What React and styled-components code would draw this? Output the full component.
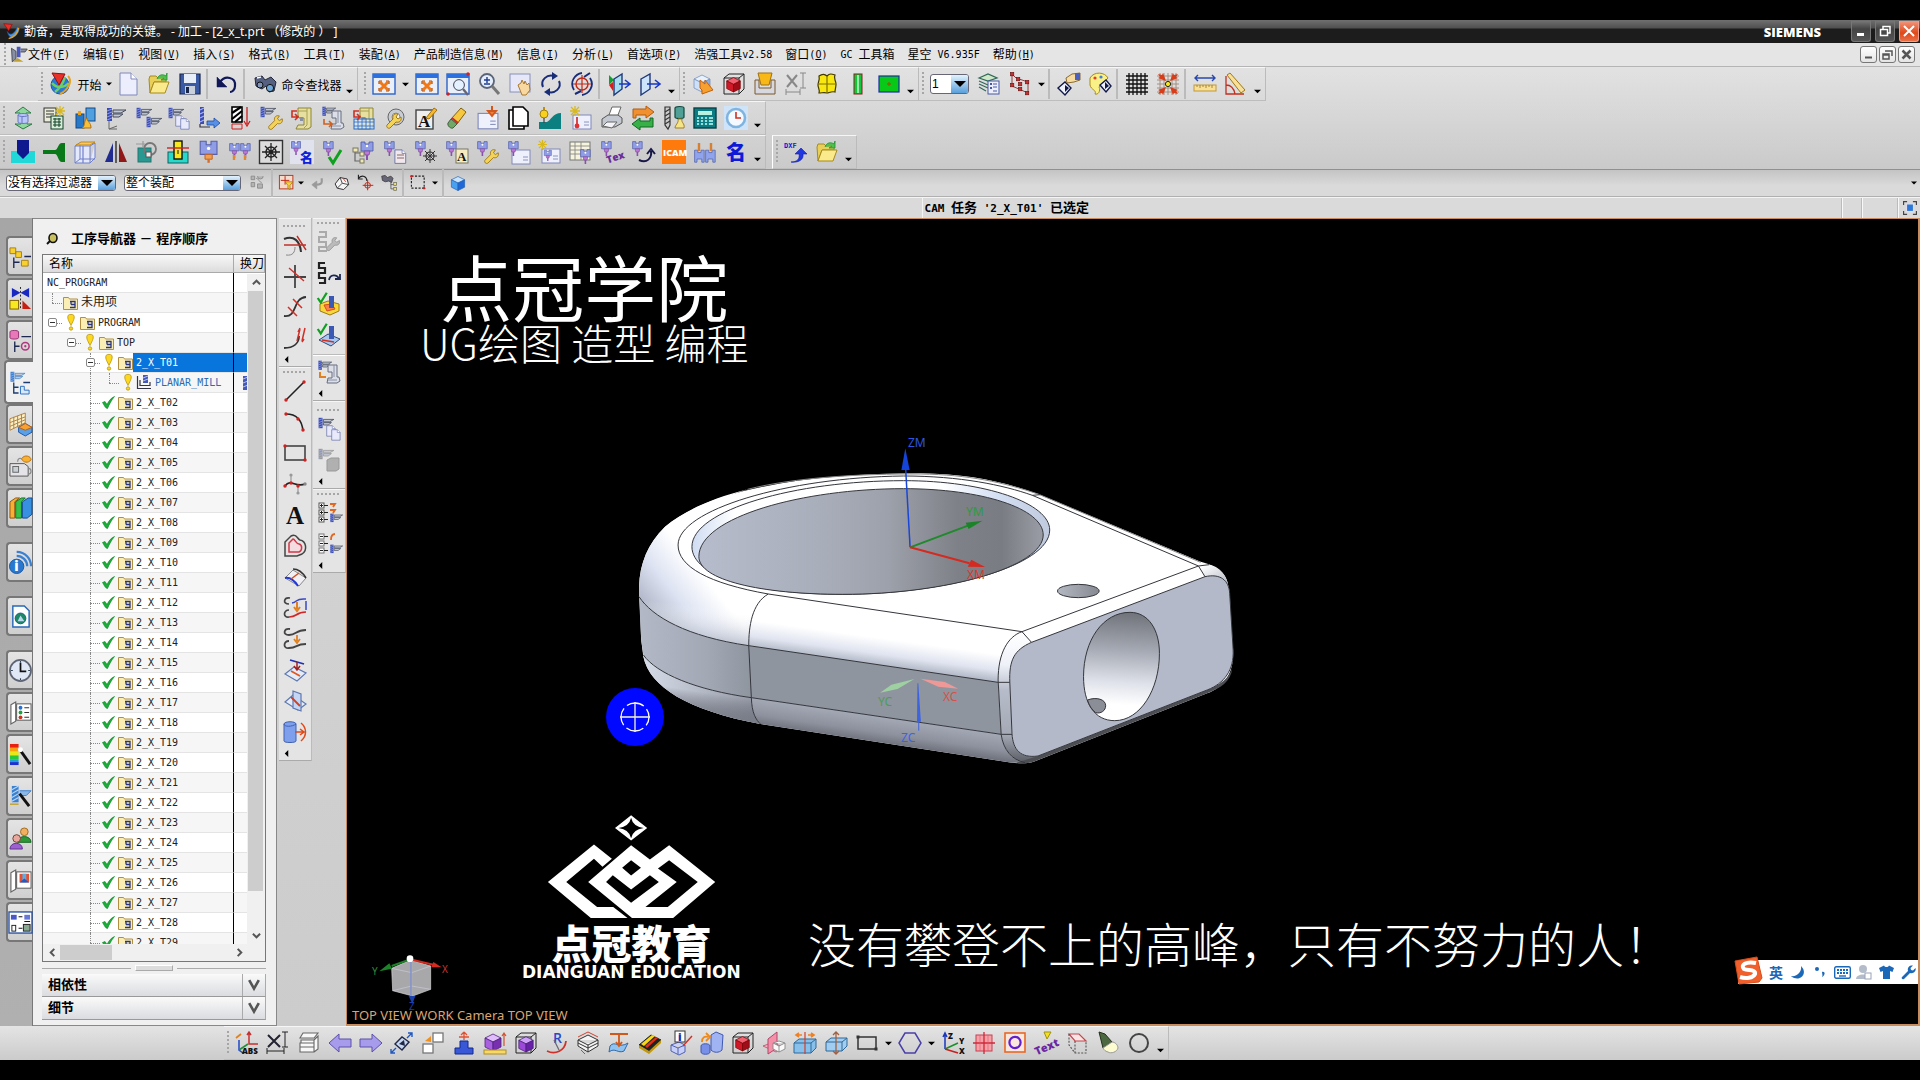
import React from 'react';
import styled, { createGlobalStyle, css } from 'styled-components';

const CJK = '"Liberation Sans", "Noto Sans CJK SC", sans-serif';
const MONO = '"DejaVu Sans Mono", "Noto Sans CJK SC", monospace';
const UI = '"Open Sans", "Noto Sans CJK SC", sans-serif';

const GlobalStyle = createGlobalStyle`
  *, *::before, *::after { box-sizing: border-box; }
  body { margin: 0; background: #000; color: #000; font-family: ${CJK}; font-size: 12px; overflow: hidden; }
  button, select { font: inherit; color: inherit; }
  svg { display: block; flex: none; overflow: visible; }
`;

/* ---------- drawing helpers ---------- */
const P = (d, s = 'none', f = 'none', w = 1.2) => <path d={d} stroke={s} fill={f} strokeWidth={w} />;
const R = (x, y, w, h, f = 'none', s = 'none', sw = 1) => <rect x={x} y={y} width={w} height={h} fill={f} stroke={s} strokeWidth={sw} />;
const C = (x, y, r, f = 'none', s = 'none', sw = 1) => <circle cx={x} cy={y} r={r} fill={f} stroke={s} strokeWidth={sw} />;
const T = (x, y, t, z, f, wt = 700, fam = UI) => <text x={x} y={y} fontSize={z} fill={f} fontWeight={wt} fontFamily={fam}>{t}</text>;
const G = (x, y, s, k) => <g transform={`translate(${x} ${y}) scale(${s})`}>{k}</g>;

const mill = (c = '#3a4cb4', l = '#444a5c') => <>{R(2, 1, 5, 13, c)}{P('M2 4l5-2M2 7l5-2M2 10l5-2M2 13l5-2', '#a9b4f0', 'none', 0.8)}{P('M8 3h13l-5 3H8zM8 7h10l-4 3H8z', l, '#c4c8d4', 1)}</>;
const head = <>{P('M2 2h4v2h4V2h4v9H2z', '#5560a8', '#8f9ce6', 0.9)}{C(8, 6, 1.2, '#fff')}{P('M5 11h6l-1 4H6z', '#7a4a9c', '#c078d8', 0.8)}{P('M8 15v5', '#8a50b0', 'none', 2)}</>;
const wrench = <>{P('M2 13L8 7C7 3 10 1 13 2L11 5l2 2 3-2c1 4-2 6-5 5L5 16c-2 1-4-1-3-3z', '#a07818', '#f3d458', 1)}</>;
const doc = (f = '#e8eafc') => <>{P('M1 1h8l4 4v11H1z', '#6670a8', f, 1)}{P('M9 1v4h4', '#6670a8', '#fff', 0.8)}</>;
const form = <>{R(1, 4, 18, 14, '#eef0fc', '#8088b8')}{P('M12 11h5M12 14h5', '#8088b8', 'none', 0.9)}</>;
const folder = <>{P('M2 7l1-3h6l2 2h8v4H7L3 21z', '#a58a20', '#e9cf58', 1)}{P('M3 21L7 10h15l-4 11z', '#a58a20', '#fbea8c', 1)}</>;
const check = P('M1 8l4 6L13 1', '#10a020', 'none', 3);
const cube = (f, t, r, o = '#555') => <>{P('M2 7l8-4 8 4-8 4z', o, t, 0.8)}{P('M2 7l8 4v9l-8-4z', o, f, 0.8)}{P('M18 7l-8 4v9l8-4z', o, r, 0.8)}</>;
const star = P('M5 0v10M0 5h10M1 1l8 8M9 1L1 9', '#d8b820', 'none', 1.3);
const gear = <>{C(7, 7, 4, '#d8d8d8', '#333', 1.2)}{P('M7 0v14M0 7h14M2 2l10 10M12 2L2 12', '#333', 'none', 1)}</>;
const boxed = <>{P('M2 6l5-4h15v15l-5 5H2zM2 6h15v16M17 6l5-4', '#222', 'none', 1)}</>;
const machine = <>{P('M8 2h13v19l-3 2H6l2-4h6v-7H9L8 9z', '#8c8438', '#e6dfa0', 1)}{P('M17 2v17l-3 3M8 5h9', '#a8a050', 'none', 1)}{R(10, 11, 3, 4, '#8890a0')}</>;
const redArrow = P('M7 5H2v6h5M5 8l3 3-3 3', '#d03020', 'none', 1.6);
const robot = <>{P('M11 5h9v12h2l1 4-3 2h-10l1-5h4v-6h-4z', '#666c80', '#dcdfe8', 1)}{P('M17 5v12M11 20h9', '#8890a4', 'none', 1)}</>;
const dot = (x, y) => C(x, y, 1.7, '#d02020');
const win = <>{R(1, 2, 22, 20, '#eaf0fa', '#2c62c8', 1.4)}{R(1, 2, 22, 4, '#2c70e0')}</>;
const fit = <>{win}{P('M8 10l8 8M16 10l-8 8', '#f07818', 'none', 3)}{P('M7 9h3M7 9v3M17 19h-3M17 19v-3M17 9h-3M17 9v3M7 19h3M7 19v-3', '#b84c00', 'none', 1.2)}</>;
const sheet = P('M3 15C8 9 12 18 21 12l-4 8C11 23 8 16 2 21z', '#3068a8', '#90c4f0', 1);

const ICONS = {
  start: <>{C(11, 13, 9, '#2878d8', '#1c54a0')}{P('M3 11c5 6 12 5 17 0M6 20c4-3 8-8 10-15', '#6fd060', 'none', 2.4)}{P('M3 1l13 1-6 11z', '#901010', '#e83028', 1)}{P('M19 4c5 5 0 14-8 18', '#e8a020', 'none', 2)}</>,
  fresh: <>{P('M4 1h11l6 6v16H4z', '#8088b8', '#eceefd', 1)}{P('M15 1v6h6', '#8088b8', '#fff', 1)}</>,
  open: <>{folder}{P('M10 7c2-5 6-5 9-3l1-3v7h-6l3-2', '#209030', '#50c050', 0.8)}</>,
  save: <>{P('M2 2h20v20H2z', '#18264c', '#3b5aa6', 1.2)}{R(6, 2, 12, 9, '#e8eef8')}{R(7, 14, 10, 8, '#c8d0dc')}{R(8, 15, 3, 6, '#18264c')}</>,
  undo: <>{P('M5 10C10 3 21 5 20 14c0 4-3 6-5 6', '#101858', 'none', 2.2)}{P('M2 5v10h10z', '#101858', '#101858', 0.5)}</>,
  binoc: <>{P('M2 6l7-2 3 4 6-3 5 5-2 9-5 1-3-6-4 3-6-3z', '#222838', '#566080', 1)}{C(17, 16, 3.6, '#6fa8d8', '#111')}{C(7, 13, 3, '#8094b8', '#111')}{P('M4 6l4-1', '#fff', 'none', 1.4)}</>,
  fit,
  zoomwin: <>{win}{C(13, 13, 5.4, '#e4f2ff', '#445')}{P('M17 17l5 6', '#667', 'none', 2.4)}{dot(2, 22)}{dot(22, 2)}</>,
  zoom: <>{C(10, 9, 7, '#e4eefc', '#5a6478', 1.8)}{P('M10 5v6M7 8h6M7 12h6', '#1c3c90', 'none', 1.4)}{P('M15 14l7 8', '#777', 'none', 3)}</>,
  pan: <>{R(2, 2, 20, 18, '#e6e8fa', '#8890b8')}{P('M10 13l3-2 1-3 2 4 1-3 2 4 2-2 1 7-4 5h-4z', '#a87830', '#f8d8a0', 1)}</>,
  rotate: <>{P('M4 15C1 8 8 2 15 4M20 9c3 7-4 13-11 11', '#182c78', 'none', 2)}{P('M13 0l6 4-6 4zM11 16l-6 4 6 4z', 'none', '#182c78')}</>,
  orient: <>{C(12, 12, 6, 'none', '#c02818', 1.4)}{P('M12 3v18M3 12h18', '#c02818', 'none', 1.2)}{P('M4 18C-1 10 5 2 12 1M20 6c5 8-1 16-8 17', '#182c78', 'none', 1.8)}{P('M11 19l-6 3M14 5l6-4', '#182c78', 'none', 2)}</>,
  viewin: <>{P('M2 3l5 5-5 5z', 'none', '#10a030')}{P('M2 13l4-3v9z', 'none', '#d02020')}{P('M7 7l8-5v15l-8 6z', '#203878', '#a8dcf0', 1.4)}{P('M12 12h10M18 8l5 4-5 4', '#1838c8', 'none', 1.6)}</>,
  viewpage: <>{P('M3 7l9-5v15l-9 6z', '#203878', '#cde4fa', 1.4)}{P('M9 12h12M17 8l5 4-5 4', '#1838c8', 'none', 1.6)}</>,
  extract: <>{G(1, 0, 1, cube('#cde0f8', '#e8f2ff', '#88b0e8', '#7890b8'))}{P('M9 8l5 4v-4l8 10-11 4v-4l-2-2z', '#c06010', '#f6a030', 1)}</>,
  redcube: <>{boxed}{G(3, 3, 0.85, cube('#d01828', '#f06070', '#a00c18', '#700'))}</>,
  pocket: <>{P('M2 8h4v8h12V8h4v14H2z', '#78582c', '#d8d8e0', 1)}{P('M5 1h14l-3 12h-8z', '#a07010', '#f8b818', 1)}</>,
  xdim: <>{P('M3 3l10 12M13 3L3 15', '#888', 'none', 2)}{P('M19 1v15M16 1h6M16 16h6M2 20h14M2 17v6M16 17v6', '#888', 'none', 1)}</>,
  ywin: <>{P('M4 4c4-3 6-2 8 0 3-3 5-2 8-1-2 4 1 5 1 9s-1 5-1 8c-4-1-6 1-8 1-3-1-5 0-8 0 1-4-1-5-1-8s2-5 1-9z', '#403800', '#f8e810', 1.2)}{P('M12 4v17M3 12h18', '#807000', 'none', 1.2)}</>,
  gslim: <>{R(8, 2, 8, 20, '#10c838', '#802020')}{P('M12 3v18', '#fff', 'none', 1.2)}</>,
  grect: <>{R(2, 4, 20, 16, '#08c818', '#1830a0', 1.2)}{C(12, 12, 1.2, 'none', '#b04000')}</>,
  layers: <>{P('M2 6l9-4 9 4-9 3zM2 9l9 4M2 12l9 4M2 15l7 4', '#306858', '#cfe8c8', 1.2)}{R(11, 9, 11, 13, '#eceefe', '#4858a0')}{P('M16 12h4M16 15h4M16 19h4', '#4858a0')}{R(13, 11, 2, 2, '#4858a0')}{R(13, 15, 2, 2, '#4858a0')}</>,
  dots: <>{P('M4 2v12l16 7V10L8 6z', '#904040', 'none', 1)}{[[4, 2], [10, 7], [4, 13], [12, 17], [19, 10], [19, 21], [12, 12]].map(([x, y]) => <g key={x + '-' + y}>{R(x - 1.6, y - 1.6, 3.4, 3.4, '#c83030', '#601010', 0.6)}</g>)}</>,
  handtag: <>{P('M1 16l7-6 6 6-6 7z', '#101848', '#f0f2fa', 1.4)}{P('M8 13v7l4-4z', 'none', '#101848')}{P('M9 6l6-4 8-1v7l-6 2-7 1z', '#8a6a30', '#f6dca0', 1)}{R(18, 1, 5, 7, '#4c60c0')}</>,
  palette: <>{P('M2 6C6-1 17 0 20 6c-4 4-7 6-9 9 2 4-1 8-4 7 2-4-4-4-5-9z', '#a88a18', '#faf088', 1)}{C(7, 6, 1.6, '#e04030')}{C(13, 5, 1.6, '#4080e0')}{P('M12 13l6-5 5 6-5 6z', '#101848', '#f0f2fa', 1.4)}{P('M17 10v7l4-3z', 'none', '#101848')}</>,
  grid: <>{P('M1 4h22M1 8h22M1 12h22M1 16h22M1 20h22M4 1v22M8 1v22M12 1v22M16 1v22M20 1v22', '#111', 'none', 1.3)}</>,
  gridred: <>{P('M1 4h22M1 8h22M1 12h22M1 16h22M1 20h22M4 1v22M8 1v22M12 1v22M16 1v22M20 1v22', '#a08878', 'none', 0.9)}{P('M2 2l4 1 1-2 3 8-8-3 2-1zM22 2l-4 1-1-2-3 8 8-3-2-1zM2 22l4-1 1 2 3-8-8 3 2 1zM22 22l-4-1-1 2-3-8 8 3-2 1z', 'none', '#d83c18')}{C(12, 12, 2.6, '#f8e820', '#222')}</>,
  ruler: <>{P('M2 6h20M5 3L2 6l3 3M19 3l3 3-3 3', '#2848b0', 'none', 1.4)}{R(1, 13, 22, 6, '#f8e098', '#c09838')}{P('M4 13v2M7 13v3M10 13v2M13 13v3M16 13v2M19 13v3', '#a07c20', 'none', 0.9)}</>,
  protract: <>{P('M3 3l3-2 15 17-4 3z', '#a07818', '#f8e098', 1)}{P('M2 4v18h18M2 13c5 0 8 4 9 9', '#c03020', 'none', 1.3)}</>,

  updown: <>{P('M4 7l8-6 8 6h-5c0 3-6 3-6 0z', '#307848', '#90d8a0', 1)}{P('M4 18l8 5 9-5h-5c0-3-6-3-6 0z', '#307848', '#90d8a0', 1)}{P('M7 9c0-2 10-2 10 0v7c0 2-10 2-10 0z', '#6878c0', '#b8c6f8', 1)}{P('M7 9c0 2 10 2 10 0M11 11v6', '#6878c0', 'none', 1)}</>,
  calc: <>{R(2, 2, 12, 14, '#e8ecd8', '#333')}{P('M4 5h8M4 8h8M4 11h8', '#333')}{R(9, 10, 12, 13, '#d8ecd8', '#104028')}{P('M11 13h8M11 16h8M11 19h8M13 12v9M17 12v9', '#104028', 'none', 1)}{G(13, 0, 1, star)}</>,
  gradblue: <>{R(3, 8, 8, 14, '#2878c8', '#104888')}{R(13, 2, 9, 13, '#50a0e0', '#104888')}{R(5, 5, 3, 4, '#e8a020')}{P('M14 12c0 4 4 4 4 10H9c4-3 1-6 5-10z', '#b07010', '#f8c038', 1)}</>,
  mill: G(1, 1, 1, <>{mill()}{P('M4 14v8h8M12 19l-8 3', '#666', 'none', 1)}</>),
  mill2: <>{G(0, 1, 0.8, mill())}{G(10, 10, 0.8, mill())}</>,
  milldoc: <>{G(1, 1, 0.8, mill())}{G(9, 9, 0.7, doc())}{G(14, 12, 0.7, doc())}</>,
  millarrow: <>{G(3, 1, 1, <>{R(0, 0, 4, 17, '#3a4cb4')}{P('M0 3l4-2M0 7l4-2M0 11l4-2M0 15l4-2', '#a9b4f0')}</>)}{P('M3 18v3h10', '#334')}{P('M10 15h7v-3l6 5-6 5v-3h-7z', '#2048a0', '#5890e8', 0.8)}</>,
  hatch: <>{R(4, 1, 10, 15, '#fff', '#000', 1.6)}{P('M4 7l9-6M4 13l10-8M7 16l7-6', '#000', 'none', 2.2)}{P('M4 18v5h10v-5M4 18h10', '#d02020', 'none', 1)}{P('M19 1v17M16 15l3 5 3-5', '#d02020', 'none', 1.3)}</>,
  millwrench: <>{G(0, 0, 0.8, mill())}{G(8, 8, 0.95, wrench)}</>,
  machine: <>{machine}{redArrow}</>,
  machine2: <>{G(0, 0, 0.7, mill())}{robot}{P('M3 13v5h7M8 15l3 3-3 3', '#d06020', 'none', 1.6)}</>,
  machgrid: <>{machine}{R(2, 13, 20, 10, 'rgba(220,236,255,0.7)', '#2868c0')}{P('M2 16h20M2 20h20M6 13v10M10 13v10M14 13v10M18 13v10', '#2868c0', 'none', 0.8)}{redArrow}</>,
  wrenchring: <>{C(13, 11, 8, '#c8ccd4', '#666')}{C(13, 11, 4, '#f0f0f0', '#888')}{G(2, 6, 1, wrench)}</>,
  editA: <>{R(2, 4, 17, 19, '#eee', '#444', 1.4)}{T(4, 21, 'A', 17, '#111', 700, '"Liberation Serif", serif')}{P('M12 12l8-10 3 2-8 9z', '#a07010', '#f8b828', 1)}</>,
  eraser: <>{P('M6 13L16 2l5 4-9 12z', '#806010', '#f6c840', 1)}{P('M6 13l6 5-4 4c-2 1-6-2-5-5z', '#406040', '#70a868', 1)}{P('M7 12l6 5', '#c03030', 'none', 1.8)}</>,
  formdown: <>{G(1, 3, 1.1, form)}{P('M16 0v6M12 5l4 5 4-5z', '#d05820', '#f08040', 2)}</>,
  pages: <>{P('M6 4H2v19h15v-3', '#000', '#fff', 1.6)}{P('M6 1h10l5 5v14H6z', '#000', '#fff', 1.6)}</>,
  teal: <>{P('M1 23V16h8c3-1 6-9 14-9v16z', 'none', '#0c8080')}{P('M6 1v4', '#c09010', 'none', 2)}{C(6, 8, 4, '#f8d020', '#a08010')}{P('M6 12v5', '#444')}</>,
  starform: <>{G(3, 5, 1, form)}{G(1, 0, 1, star)}{P('M8 11v8', '#d02020', 'none', 1.6)}{C(8, 20, 2.4, '#e03030')}</>,
  printer: <>{P('M9 9l3-8h9l-3 8', '#666', '#fff', 1)}{P('M2 13l6-4h10l4 3v5l-7 4H2z', '#555', '#c4c8d0', 1)}{P('M3 20l4-4h10l-5 6z', '#666', '#f4f4f8', 1)}</>,
  swap: <>{P('M2 3h13V0l8 6-8 6V9H5v3H2z', '#b05c10', '#f09030', 1)}{P('M22 21H9v3l-8-6 8-6v3h10v-3h3z', '#106820', '#38b048', 1)}</>,
  drillset: <>{P('M3 1h5v18l-2 4-3-4z', '#333', '#ccc', 1.2)}{P('M3 6l5-3M3 10l5-3M3 14l5-3M3 18l5-3', '#333', 'none', 1.2)}{P('M13 2c0-2 9-2 9 0v9c0 2-9 2-9 0z', '#104840', '#50a098', 1.2)}{P('M16 13h4c-1 4 3 4 2 9h-9c0-3 4-5 3-9z', '#a08020', '#f6e488', 1)}</>,
  calcteal: <>{R(1, 2, 22, 20, '#0a7c84', '#084048', 1.4)}{R(5, 5, 14, 4, '#b8f0e0')}{P('M4 12h16M4 15h16M4 18h16', '#c8fff8', 'none', 1.4)}{P('M7 10v10M11 10v10M15 10v10', '#0a7c84', 'none', 1.8)}</>,
  clock: <>{R(0, 0, 24, 24, '#cfe4f8')}{C(12, 12, 9, '#f4faff', '#80b4e0', 2.6)}{P('M12 6v6h5', '#d03020', 'none', 1.6)}</>,

  bluedown: <>{R(0, 11, 24, 12, '#20d8d8')}{P('M6 0h12v13l-6 6-6-6z', 'none', '#101890')}</>,
  green: <>{P('M1 10h12c3 0 3-7 7-7h3v19h-3c-4 0-4-8-7-8H1z', 'none', '#087818')}</>,
  wirebox: <>{P('M2 6l5-3h15l-5 3zM2 6v17h15V6M22 3v15l-5 5M7 3v16M7 19h15M2 23l5-4', '#7080c8', '#e4e8fc', 1)}{P('M3 5l5-3h14l-5 3z', '#c08820', '#f8c860', 1)}{P('M10 6v17', '#7080c8')}</>,
  mirror: <>{P('M9 3v19H1z', 'none', '#202c90')}{P('M15 3v19h8z', 'none', '#901818')}{P('M12 1v22', '#111', 'none', 1.2)}</>,
  clip: <>{R(3, 8, 13, 14, '#289890', '#207870')}{C(15, 9, 6, 'none', '#777', 1.8)}{P('M1 4h9M8 1v7', '#999', 'none', 1.2)}{R(11, 12, 5, 5, '#f0f0f0', '#555')}</>,
  section: <>{R(2, 12, 20, 11, '#28d8c8', '#106060')}{R(8, 1, 8, 18, '#f8e820', '#111', 1.4)}{P('M1 8h22', '#d02020', 'none', 1.4)}{P('M12 10v4', '#333')}</>,
  head1: <>{G(2, 0, 1.2, <>{P('M1 1h5v3h4V1h5v11H1z', '#5560a8', '#8f9ce6', 0.9)}{C(8, 7, 1.4, '#fff')}{P('M5 12h6v4H5z', '#c06020', '#f0a050', 0.8)}{P('M8 16v3', '#d07030', 'none', 2)}</>)}</>,
  head2: <>{G(0, 2, 0.8, head)}{G(11, 2, 0.8, head)}{P('M6 15v5M17 15v5', '#e08830', 'none', 2.4)}</>,
  wheel: <>{R(0.5, 0.5, 23, 23, '#dcdcdc', '#333', 1.4)}{C(12, 12, 5, 'none', '#222', 1.4)}{P('M12 3v18M3 12h18M6 6l12 12M18 6L6 18', '#222', 'none', 1.3)}{C(12, 12, 2, '#222')}</>,
  headname: <>{R(0, 0, 24, 24, '#e0e2ee')}{G(0, 0, 0.75, head)}{T(10, 22, '名', 13, '#1020d8', 900, '"Noto Sans CJK SC", sans-serif')}</>,
  headcheck: <>{G(1, 0, 0.8, head)}{G(7, 9, 1, check)}</>,
  headtree: <>{G(7, 0, 1, head)}{P('M3 9v12h7M3 13h6', '#666')}{R(1, 8, 5, 4, '#f0e8b0', '#776')}{R(8, 12, 4, 4, '#f0e8b0', '#776')}{R(8, 19, 4, 4, '#f0e8b0', '#776')}</>,
  headdoc: <>{G(0, 0, 0.8, head)}{G(11, 9, 0.9, doc('#f0e8ec'))}{P('M14 15h7M14 18h7', '#866')}</>,
  headgear: <>{G(0, 0, 0.8, head)}{G(9, 9, 1, gear)}</>,
  headA: <>{G(0, 0, 0.8, head)}{R(11, 9, 12, 14, '#f6ecc0', '#776')}{T(12, 21, 'A', 13, '#111', 700, '"Liberation Serif", serif')}</>,
  headwrench: <>{G(0, 0, 0.8, head)}{G(7, 8, 0.95, wrench)}</>,
  headform: <>{G(4, 6, 1, form)}{G(0, 0, 0.8, head)}</>,
  headstar: <>{G(3, 5, 1, form)}{G(0, 0, 0.9, star)}{G(5, 9, 0.6, head)}</>,
  headgrid: <>{R(1, 2, 20, 18, '#f6f4dc', '#777')}{P('M1 6h20M1 10h20M1 14h20M6 2v18M12 2v18', '#888', 'none', 0.9)}{G(10, 8, 0.8, head)}</>,
  headtext: <>{G(0, 0, 0.8, head)}<g transform="rotate(-18 12 20)">{T(7, 22, 'Tex', 10, '#6a2c98', 900, UI)}</g></>,
  headarrow: <>{G(0, 0, 0.8, head)}{P('M8 20c8 4 13-2 12-9M16 14l4-5 4 5', '#181848', 'none', 2)}</>,
  icam: <>{R(0, 0, 24, 24, '#ff7a0c')}{T(1, 16, 'ICAM', 9, '#fff', 800)}</>,
  twin: <>{G(0, 7, 0.8, P('M2 4h4v3h4V4h4v15h-3v-4H5v4H2z', '#5868b0', '#8fa4ec', 1))}{G(11, 7, 0.8, P('M2 4h4v3h4V4h4v15h-3v-4H5v4H2z', '#5868b0', '#8fa4ec', 1))}{P('M6 11V3M18 11V3', '#d88030', 'none', 2.4)}</>,
  name: T(2, 20, '名', 20, '#1018d8', 900, '"Noto Sans CJK SC", sans-serif'),
  dxf: <>{T(0, 8, 'DXF', 7, '#1018d8', 700, MONO)}{P('M7 22c6 0 9-3 8-8h-4l6-6 6 6h-4c1 6-5 9-12 8z', '#1018b0', '#2038e0', 0.6)}</>,

  s_parts: <>{P('M3 3h5v5H3zM3 12h5v6H3zM12 3a4 4 0 108 0M12 14h7v6h-7z', '#888', '#b4b4b4', 1.2)}{P('M10 6c4 0 4 6 8 6', '#888')}</>,
  s_snap: <>{R(2, 2, 19, 19, '#f4dccc', '#c03820', 1.4)}{P('M10 3v12M4 9h12', '#c02818', 'none', 1.4)}{P('M10 11h11l-4 5v6l-3-2v-4z', '#a07010', '#f8d040', 1)}</>,
  s_back: <>{P('M18 6v5c0 4-4 4-8 4', '#9a9a9a', 'none', 3)}{P('M11 10l-7 5 7 6z', '#9a9a9a', '#9a9a9a', 1)}</>,
  s_cube: <>{P('M3 14l7-9 10 2 2 8-7 7-9-2z', '#333', '#f4f4f4', 1.4)}{P('M10 5l3 8 9 2M13 13l-7 7', '#333', 'none', 1.2)}{P('M14 6l4 5', '#c03020')}</>,
  s_tgt: <>{P('M2 6c6-6 12-2 12 4M2 1v6h6', '#222', 'none', 1.6)}{C(15, 16, 4, 'none', '#c02818', 1.4)}{P('M15 8v15M8 16h15', '#c02818', 'none', 1.4)}</>,
  s_bino: <>{P('M1 3l5-1 3 3 5-2 3 3-2 6-4-2-5 1-4-2z', '#333', '#667', 1)}{P('M14 10v11h4M14 15h4', '#555')}{R(18, 12, 4, 4, '#f0e080', '#665')}{R(18, 19, 4, 4, '#f0e080', '#665')}</>,
  s_rect: <>{<rect x="2" y="3" width="18" height="17" fill="none" stroke="#222" strokeWidth="1.6" strokeDasharray="3 2" />}{dot(2, 3)}{dot(20, 20)}</>,
  s_cube2: <>{G(1, 0, 1.1, cube('#4aa0f0', '#c8e4ff', '#2068d8', '#2060b0'))}</>,
  full: <>{P('M1 7V1h6M17 1h6v6M23 17v6h-6M7 23H1v-6', '#444', 'none', 2)}{R(6, 5, 12, 13, '#2c78d8', '#dde', 2)}</>,

  v_trim: <>{P('M1 6c10-4 16 2 17 13', '#333', 'none', 2)}{P('M1 12h22M14 3l9 14', '#c03028', 'none', 1.4)}{P('M3 22c7 1 9-3 9-8', '#888', 'none', 1)}</>,
  v_trim2: <>{P('M1 13h22M12 1v23', '#444', 'none', 1.8)}{P('M6 4l15 13', '#d03028', 'none', 1.4)}</>,
  v_trim3: <>{P('M1 21c14 2 8-18 22-19', '#333', 'none', 1.8)}{P('M10 4l9 9M5 12l9 9', '#d03028', 'none', 1.5)}</>,
  v_ext: <>{P('M1 22c10 0 15-5 15-12', '#333', 'none', 1.8)}{P('M17 3l-3 12M22 2l-3 13M15 6l2-4M21 13l-2 3', '#d03028', 'none', 1.5)}</>,
  v_line: <>{P('M3 21L21 3', '#222', 'none', 1.6)}{dot(3, 21)}{dot(21, 3)}</>,
  v_arc: <>{P('M3 4c10 0 16 6 17 17', '#222', 'none', 1.6)}{dot(3, 4)}{dot(15, 9)}{dot(20, 20)}</>,
  v_rect: <>{R(2, 5, 20, 14, 'none', '#444', 1.6)}{dot(2, 5)}{dot(22, 19)}</>,
  v_spline: <>{P('M2 14C8 6 12 16 22 12', '#222', 'none', 1.8)}{P('M8 3v9M15 13v8', '#999')}{C(8, 3, 1.6, '#999')}{C(15, 21, 1.6, '#999')}{dot(2, 14)}{dot(8, 11)}{dot(15, 14)}{C(22, 12, 1.7, '#888')}</>,
  v_A: T(3, 21, 'A', 25, '#111', 700, '"Liberation Serif", serif'),
  v_offset: <>{P('M2 22V8l6-6c6-3 6 3 9 4 6 1 8 10 2 14l-5 2z', '#444', 'none', 1.5)}{P('M6 18V9l4-4c2 0 3 5 6 5 4 1 3 7 0 8z', '#d03848', '#f4dce0', 1.5)}</>,
  v_bridge: <>{P('M2 13l8-8 13 8-7 8z', '#888', '#f0f0f4', 1)}{P('M2 13c5-1 9 2 13 8', '#2038d8', 'none', 2)}{P('M10 4c5 0 10 4 13 9', '#333', 'none', 1.6)}{P('M8 14l8-6', '#d05020', 'none', 1.5)}</>,
  v_proj: <>{P('M7 2C1 1-1 8 6 8M6 14c-6 0-6 8 0 7', '#444', 'none', 1.7)}{P('M9 7c6-1 3-5 14-4M23 5v9', '#3848c8', 'none', 1.5)}{P('M14 6v7M11 11l3 4 3-4', '#e08020', 'none', 2)}{P('M6 21c9 0 6-5 17-5', '#d02828', 'none', 1.7)}</>,
  v_proj2: <>{P('M7 2C1 1-1 8 6 8c8 0 6-5 17-5M6 14c-6 0-6 8 0 7 9 0 6-4 17-4', '#444', 'none', 1.8)}{P('M14 8v6M11 12l3 4 3-4', '#e08020', 'none', 1.8)}</>,
  v_plane: <>{P('M2 16l9-7 12 6-9 8z', '#6078b0', '#e4ecf8', 1.2)}{P('M7 2l14 4', '#2030b0', 'none', 1.8)}{P('M14 4v7M11 8l3 4 3-4', '#a02020', 'none', 1.5)}{P('M8 13l9 5', '#e05820', 'none', 1.8)}</>,
  v_planes: <>{P('M2 13l8-7 13 9-8 6z', '#6078b0', '#e4ecf8', 1.2)}{P('M10 2l8 3v17l-8-3z', '#6078b0', '#c4d6f4', 1.2)}{P('M8 8l9 9', '#d04020', 'none', 1.8)}</>,
  v_cyl: <>{P('M1 4c0-3 12-3 12 0v17c0 2-12 2-12 0z', '#4060b0', '#7ea0ec', 1)}{P('M1 4c0 3 8 3 12 0', '#4060b0', 'none', 1)}{P('M12 12h8M17 9l4 3-4 3M18 3c6 5 6 13 0 18', '#e04818', 'none', 1.5)}</>,
  w_snakegrey: <>{P('M2 2h7v5H2v5h7v5H2v4h8', '#aaa', 'none', 2)}{G(8, 6, 0.9, P('M2 13L8 7C7 3 10 1 13 2L11 5l2 2 3-2c1 4-2 6-5 5L5 16c-2 1-4-1-3-3z', '#999', '#bbb', 1))}</>,
  w_snake: <>{P('M8 2H2v5h6v5H2v5h6v5H2', '#222', 'none', 2.2)}{P('M12 19c1-6 8-6 10-1M18 18h5v-5', '#1c2850', 'none', 1.8)}</>,
  w_verify: <>{P('M3 12l8-3 11 3v7l-9 4-10-4z', '#a07810', '#f8d838', 1)}{P('M7 13l8-1 3 5-8 2z', '#d05020', '#f88048', 1)}{R(12, 4, 5, 12, '#3a58b4')}{G(0, 0, 0.75, check)}</>,
  w_verify2: <>{P('M2 17l9-6 12 5-9 7z', '#304878', '#a8c8f0', 1)}{P('M5 17l12 2', '#d03020', 'none', 1.5)}{R(12, 3, 5, 13, '#3a58b4')}{G(0, 0, 0.75, check)}</>,
  w_post: <>{G(0, 0, 0.7, mill())}{robot}{P('M3 12v5h6', '#e08020', 'none', 2)}</>,
  w_copy: <>{G(0, 0, 0.8, mill())}{G(9, 8, 0.7, doc())}{G(14, 12, 0.7, doc())}</>,
  w_paste: <>{G(0, 0, 0.8, mill('#9a9a9a', '#999'))}{P('M10 12l4-2h8v11l-3 2h-9z', '#999', '#b0b0b0', 1)}</>,
  w_tree: <>{[4, 11, 18].map((y) => <g key={y}>{R(2, y - 2, 5, 5, '#fff', '#555')}{P(`M7 ${y + 0.5}h4M3 ${y + 0.5}h3M4.5 ${y - 1}v3`, '#222', 'none', 1)}</g>)}{P('M13 3h5l-2 3M13 9h5l-2 3', '#e06820', 'none', 1.8)}{G(12, 12, 0.65, mill())}</>,
  w_tree2: <>{[4, 11, 18].map((y) => <g key={y}>{R(2, y - 2, 5, 5, '#fff', '#777')}{P(`M7 ${y + 0.5}h4M3 ${y + 0.5}h3`, '#222', 'none', 1)}</g>)}{P('M18 2c-4 0-4 5-4 6', '#e06820', 'none', 1.8)}{G(12, 12, 0.65, mill())}</>,

  b_abs: <>{P('M14 2v11h9M12 4l2-3 2 3', '#c83030', 'none', 1.5)}{P('M4 9v10l4 3', '#2048c8', 'none', 1.5)}{P('M1 7l5-4', '#e08020', 'none', 1.8)}{P('M4 19l9-6', '#20903c', 'none', 1.6)}{T(7, 23, 'ABS', 8, '#111', 800)}</>,
  b_xdim: <>{P('M2 4l12 12M14 4L2 16', '#223', 'none', 2)}{P('M19 1v15M16 1h6M16 16h6M1 20h17M1 17v6M18 17v6', '#222', 'none', 1)}</>,
  b_layers: <>{P('M6 2h15l-4 5H3zM4 9h13v3H4zM3 12h14v4H3zM3 16h14v5H3zM17 9l4-4v13l-4 3', '#666', '#f8f8f8', 1.1)}</>,
  b_left: P('M1 12L11 3v5h12v8H11v5z', '#5c50a8', '#a79cec', 1),
  b_right: P('M23 12L13 3v5H1v8h12v5z', '#5c50a8', '#a79cec', 1),
  b_tag: <>{P('M5 13l7-7 7 5-7 8z', '#202848', '#c8d8f0', 1.4)}{P('M9 13l5-4 1 6z', 'none', '#202848')}{P('M17 7l5-5M18 2h4v4M6 17l-5 5M1 18v4h4', '#2058c0', 'none', 1.4)}</>,
  b_copy: <>{R(12, 2, 10, 9, '#fff', '#777', 1.3)}{R(2, 13, 10, 9, '#fff', '#777', 1.3)}{P('M4 10l6-5v6z', 'none', '#f09020')}</>,
  b_base: <>{P('M8 10h8v7h5v6H3v-6h5z', '#102890', '#3858d8', 1)}{P('M12 9V1M7 6h10M12 1l-3 3M12 1l3 3', '#e05030', 'none', 1.3)}</>,
  b_measure: <>{G(0, 0, 1, cube('#a860e0', '#e0bcfa', '#7830b0', '#502080'))}{R(1, 19, 22, 4, '#f8d868', '#b09020')}{P('M21 3v12M19 5l2-3 2 3', '#d05030')}</>,
  b_boxp: <>{boxed}{G(3, 3, 0.9, cube('#9c48d8', '#d0a0f8', '#6820a8', '#402070'))}</>,
  b_radius: <>{T(8, 12, 'R', 14, '#2848c8', 600)}{P('M2 20c8 4 18 0 19-10', '#d03028', 'none', 1.8)}{P('M9 9l5 10', '#667', 'none', 1.2)}</>,
  b_wire: <>{P('M2 9l10-5 10 5-10 5zM2 9v6l10 6 10-6V9M2 12l10 5 10-5M12 14v7', '#333', '#f4f4f4', 1)}{P('M2 6l10-5 10 5M5 19l4 4', '#d04030', 'none', 1)}</>,
  b_surf: <>{sheet}{P('M3 3h18M12 3v11M9 11l3 4 3-4', '#d05818', 'none', 1.8)}</>,
  b_stripe: <>{P('M1 14L13 4l10 5-12 11z', '#222', '#222', 1)}{P('M3 13L14 4l3 1L6 15z', 'none', '#f8d818')}{P('M7 15l11-9 2 1-11 10z', 'none', '#e03018')}{P('M1 14v3l10 6 12-11V9L11 20z', 'none', '#c09810')}</>,
  b_info: <>{P('M2 14l8-3 6 3v7l-6 3-8-4zM2 14l7 3 7-3M9 17v6', '#5060b0', '#c8d0fa', 1)}{R(6, 0, 10, 11, '#fff', '#333')}{T(9, 10, 'i', 11, '#1028b0', 800)}{P('M14 15l9-10', '#d03028', 'none', 1.4)}</>,
  b_tube: <>{P('M11 4l5-3 7 3-1 15c-3 3-8 3-11 0z', '#4058b0', '#a0b4f4', 1)}{P('M1 15c0-3 9-3 9 0v6c0 3-9 3-9 0z', '#4058b0', '#7890e8', 1)}{P('M2 11c0-5 3-6 6-5M6 2l4 4-4 4', '#f08818', 'none', 1.8)}</>,
  b_datum: <>{P('M1 15l8-3 14 4-9 5z', '#c05870', '#f8b0c0', 0.9)}{P('M6 8l9-7v16l-9 6z', '#b04868', '#f490a8', 1)}{P('M11 12l6-2 6 2v6l-6 3-6-3zM11 12l6 3 6-3M17 15v6', '#888', '#fafafa', 0.9)}</>,
  b_split: <>{P('M1 12l5-4h17v9l-5 5H1zM1 12h17v10M18 12l5-4', '#306898', '#88c0ec', 1)}{P('M12 1v22', '#d04028', 'none', 1.2)}{P('M4 4h5M15 4h5M6 2L3 4l3 2M18 2l3 2-3 2', '#f08020', 'none', 1.6)}</>,
  b_split2: <>{P('M2 11l5-4h16v8l-5 5H2zM2 11h16v9M18 11l5-4', '#306898', '#a0cdf0', 1)}{P('M12 1v22M9 4l3-3 3 3M9 20l3 3 3-3', '#a06040', 'none', 1.3)}</>,
  b_rect: <>{R(3, 6, 18, 12, 'none', '#333', 1.5)}{R(1.5, 4.5, 3, 3, '#333')}{R(19.5, 16.5, 3, 3, '#333')}</>,
  b_hex: P('M7 2h10l6 10-6 10H7L1 12z', '#4840a8', 'none', 1.5),
  b_csys: <>{P('M4 18V3M2 6l2-4 2 4', '#1838c0', 'none', 1.5)}{P('M4 18l13-6', '#189028', 'none', 1.5)}{P('M4 18l13 4', '#c82020', 'none', 1.5)}{T(7, 8, 'Z', 8, '#111', 800)}{T(18, 13, 'Y', 8, '#111', 800)}{T(18, 23, 'X', 8, '#111', 800)}</>,
  b_cross: <>{R(4, 4, 16, 16, '#f6a0a8', '#c84050', 1)}{P('M12 1v22M1 12h22', '#d02838', 'none', 1.3)}{P('M8 4v16M16 4v16', '#d86070', 'none', 0.6)}</>,
  b_circ: <>{R(2, 2, 20, 19, '#fbe8dc', '#e86828', 1.6)}{C(12, 11.5, 5.6, 'none', '#6020d0', 2.2)}</>,
  b_text: <><g transform="rotate(-24 12 16)">{T(0, 20, 'Text', 11, '#6a28a0', 900)}</g>{P('M10 1l3 7 4-7z', '#a09010', '#f4e020', 1)}</>,
  b_dash: <>{P('M4 3h10l7 7H10z', '#c04850', '#fbe4e4', 1.2)}<path d="M4 3v11l6 8h11V10M10 10v12" fill="none" stroke="#555" strokeWidth="1.1" strokeDasharray="2 1.4" /></>,
  b_lamp: <>{P('M3 1l6 2 7 8-9 6z', '#223018', '#4c6840', 1)}{P('M7 17l9-6c3 0 6 3 6 6-1 4-7 6-10 4-3-1-4-2-5-4z', '#999', '#fcfcd0', 1)}</>,
  b_ring: C(12, 12, 9, 'none', '#444', 2),

  n_asm: <>{P('M1 3h6v6H1zM7 7h6v6H7zM13 16h7v6h-7z', '#a88010', '#f8d030', 1)}{P('M5 13v11M5 18h6M16 12h7', '#1c2850', 'none', 1.4)}</>,
  n_cons: <>{P('M3 1l9 5 9-5v10l-9-5-9 5z', 'none', '#1828c0')}{R(1, 14, 9, 9, '#f8e820', '#806000')}{P('M14 14l9 9h-9z', 'none', '#c82010')}<path d="M12 0v24" stroke="#222" strokeDasharray="2 2" /></>,
  n_part: <>{P('M1 3c0-2 9-2 9 0v6c0 2-9 2-9 0z', '#903070', '#e878b8', 1)}{P('M6 13v11M6 18h5M13 8h10', '#1c2850', 'none', 1.4)}{C(17, 18, 4, 'none', '#b03880', 1.6)}{C(17, 18, 1.2, '#b03880')}</>,
  n_op: <>{G(1, 0, 0.8, mill('#3c80d0', '#4888c8'))}{P('M6 12v11h5M6 17h5M16 12h7', '#1c3c70', 'none', 1.4)}{P('M13 16h4v4h5v4h-9z', '#2c70c0', '#d8e8fa', 1)}</>,
  n_grid: <>{P('M1 6l16-6v10L1 18zM5 4v12M9 3v12M13 1v12M1 10l16-6M1 14l16-7', '#b08040', '#fbf0c8', 1)}{P('M10 15l7-4 7 4v5l-7 4-7-4z', '#1c58a8', '#58a0e8', 1)}{P('M10 15l7 3 7-3-7-4z', '#b86010', '#f8a030', 1)}</>,
  n_mach: <>{P('M1 9h15l4 3v10H1z', '#555', '#e4e4e8', 1)}{R(4, 12, 6, 6, '#c8d0d8', '#666')}{P('M13 4c3-5 10-3 10 1-3 4-8 3-10-1z', '#b87010', '#f8b030', 1)}{P('M9 7c0-4 3-4 4-3M20 14c4 0 4 6 0 6', '#888')}</>,
  n_books: <>{P('M1 5l6-4h4L6 5v17H1z', '#905010', '#f8b030', 1)}{P('M7 5l6-4h4l-4 4v17H7z', '#107020', '#38c048', 1)}{P('M14 5l6-4h4v17l-5 4h-5z', '#104890', '#3890e0', 1)}</>,
  n_info: <>{C(8, 16, 7.5, '#2878d0', '#1c58a0')}{T(5.4, 21, 'i', 14, '#fff', 800)}{P('M8 5c6 0 11 5 11 11M8 1c9 0 15 7 15 15', '#3c80d0', 'none', 2.4)}</>,
  n_web: <>{P('M4 1h12l5 5v17H4z', '#2868b8', '#fdfdff', 1.5)}{C(12, 14, 5.6, '#1c8868', '#1c5888')}{P('M9 17l3-6 4 6z', 'none', '#bcd8f0')}</>,
  n_clock: <>{C(12, 12, 11, '#dfe8f4', '#5c6474', 1.8)}{P('M12 4v9h6', '#111', 'none', 1.8)}{P('M12 2v2M12 20v2M2 12h2M20 12h2', '#345', 'none', 1.2)}</>,
  n_hist: <>{P('M2 4l5-3v20l-5 3z', '#666', '#fff', 1.2)}{R(8, 3, 15, 17, '#fff', '#555')}{C(12, 7, 2, '#2870d0')}{C(12, 12, 2, '#20a040')}{C(12, 17, 2, '#d03020')}{P('M16 7h5M16 12h5M16 17h5', '#333')}</>,
  n_rain: <>{R(1, 1, 9, 4, '#e82010')}{R(1, 5, 9, 4, '#f8a010')}{R(1, 9, 9, 4, '#e8e818')}{R(1, 13, 9, 4, '#28c838')}{R(1, 17, 9, 4, '#20a0d8')}{R(1, 20, 9, 3, '#2030d0')}{P('M12 8l10 14', '#111', 'none', 3)}{C(12, 7, 2.6, '#fff')}</>,
  n_wiz: <>{R(3, 1, 7, 17, '#3c80d0')}{P('M3 5l7-4M3 9l7-4M3 13l7-4M3 17l7-4', '#bcd8f8')}{P('M11 6h12l-5 5h-7', '#3c80d0', '#8cb8e8', 1)}{P('M11 9l10 13', '#111', 'none', 3)}{P('M1 20h9', '#c0a020', 'none', 1.4)}</>,
  n_users: <>{C(16, 5, 4, '#f0b060', '#a06820')}{P('M9 16c0-8 14-8 14 0z', '#186820', '#2c9838', 1)}{C(8, 12, 4, '#e8a8a0', '#704028')}{P('M1 23c0-8 13-8 13 0z', '#603090', '#9c60d0', 1)}</>,
  n_file: <>{P('M2 4l5-3v20l-5 3z', '#666', '#fff', 1.2)}{R(8, 3, 15, 17, '#fff', '#555')}{R(11, 5, 10, 9, '#e85030')}{R(14, 5, 4, 9, '#58b0e8')}{P('M11 14l5-4 5 4z', 'none', '#2858c0')}</>,
  n_sys: <>{R(0, 1, 24, 22, '#fff', '#2850a0', 1.4)}{R(2, 4, 6, 5, '#4858c8')}{R(16, 4, 6, 5, '#6878d8')}{P('M10 6h4M10 18h4M16 11h6', '#111')}{R(3, 15, 4, 6, '#fff', '#222')}{R(15, 14, 7, 7, '#88a890', '#222')}</>,

  app: <>{P('M1 1l12 1-5 9z', '#901010', '#e83028', 1)}{P('M6 12c4 8 12 2 14-7l3 3c-2 12-14 18-17 4z', '#1c54a0', '#4a98e8', 1)}{P('M8 22c9-2 13-8 14-15', '#e8a020', 'none', 2)}</>,
  cam: <>{R(9, 1, 5, 14, '#4858c0')}{P('M14 4h9l-3 4h-6M2 3l6 4v10l-5 4z', '#333', '#8890a8', 1)}{P('M10 16l8 5H4z', 'none', '#c0a030')}</>,
};

const Icon = ({ n, s = 24 }) => (
  <svg width={s} height={s} viewBox="0 0 24 24" aria-hidden="true">{ICONS[n]}</svg>
);
const Tri = ({ dir = 'down', w = 7 }) => (
  <svg width={w} height={w} viewBox="0 0 8 8" aria-hidden="true">
    <path d={dir === 'down' ? 'M0 2h8L4 6z' : 'M6 0v8L2 4z'} fill="#000" />
  </svg>
);

/* ---------- shell ---------- */
const Shell = styled.div`
  height: 100vh;
  padding: 20px 0;
  background: #000;
  display: flex;
  flex-direction: column;
`;
const plain = css`border: 0; background: none; padding: 0; margin: 0; display: flex; align-items: center; justify-content: center;`;

const TitleBar = styled.header`
  height: 23px;
  flex: none;
  display: flex;
  align-items: center;
  gap: 4px;
  padding: 0 1px 0 3px;
  color: #fff;
  background: linear-gradient(#707070 0, #505050 8px, #1c1c1c 9px, #1c1c1c 100%);
`;
const TitleText = styled.h1`
  margin: 0;
  flex: 1;
  font: 400 12px/20px "Noto Sans", "Noto Sans CJK SC", sans-serif;
  white-space: pre;
`;
const Brand = styled.span`
  font: 800 13px/20px ${UI};
  margin-right: 26px;
`;
const WinButton = styled.button`
  ${plain}
  width: 20px;
  height: 21px;
  border-radius: 0 0 3px 3px;
  border: 1px solid ${(p) => (p.$close ? '#f0a090' : '#777')};
  border-top: 0;
  background: ${(p) => (p.$close ? 'linear-gradient(#f09880, #e04818 60%, #e87048)' : 'linear-gradient(#777, #444 40%, #555)')};
`;
const MenuBar = styled.nav`
  height: 24px;
  flex: none;
  display: flex;
  align-items: center;
  gap: 13px;
  padding: 0 5px 0 4px;
  background: #e5e5e5;
  border-bottom: 1px solid #b4b4b4;
`;
const MenuLead = styled.span`display: flex; align-items: center; gap: 2px; margin-right: -13px;`;
const MenuItem = styled.button`${plain} font-size: 12px; line-height: 20px; white-space: pre;`;
const Key = styled.span`font: 10px/20px ${MONO};`;
const MdiBox = styled.div`margin-left: auto; display: flex; gap: 2px;`;
const MdiButton = styled.button`
  ${plain}
  width: 17px; height: 17px;
  border: 1px solid #777;
  border-radius: 3px;
  background: linear-gradient(#fff, #e4e4e4);
`;

/* ---------- toolbars ---------- */
const ToolDeck = styled.div`
  flex: none;
  background: linear-gradient(#e2e2e2, #cacaca);
  border-bottom: 1px solid #909090;
`;
const ToolRow = styled.div`
  height: 34px;
  display: flex;
  padding-left: ${(p) => p.$lead || 0}px;
`;
const Group = styled.div`
  display: flex;
  align-items: center;
  padding: 0 2px 0 ${(p) => p.$lead || 3}px;
  margin-left: ${(p) => p.$gap || 0}px;
  border: 1px solid;
  border-width: 1px 1px 1px 0;
  border-color: #f6f6f6 #bbb #bdbdbd #fff;
  ${(p) => p.$gap && 'border-left-width: 1px;'}
`;
const dots = (w) => css`background-image: radial-gradient(circle at 1px 1px, #a6a6a6 1px, transparent 1px); background-size: ${w};`;
const Grip = styled.i`width: 4px; height: 24px; flex: none; ${dots('4px 4px')}`;
const Cell = styled.button`${plain} width: ${(p) => p.$w || 31}px; height: 31px; flex: none;`;
const TextTool = styled.button`
  ${plain}
  gap: 4px;
  width: ${(p) => p.$w}px;
  padding-left: 4px;
  flex: none;
  font-size: 12px;
  white-space: nowrap;
`;
const Drop = styled.button`${plain} width: ${(p) => p.$w || 12}px; height: 30px; flex: none;`;
const More = styled(Drop)`align-items: flex-end; padding-bottom: 4px;`;
const Sep = styled.i`width: 5px; height: 30px; flex: none; margin-left: 1px; border-left: 2px solid; border-image: linear-gradient(90deg, #bbb 50%, #f6f6f6 50%) 1;`;

const SelectBox = styled.label`
  position: relative;
  display: flex;
  width: ${(p) => p.$w}px;
  height: ${(p) => p.$h || 16}px;
  margin: 0 4px;
  border: 1px solid #667;
  border-radius: 3px;
  background: #fff;
  overflow: hidden;
`;
const Select = styled.select`
  appearance: none;
  border: 0;
  width: 100%;
  padding: 0 18px 0 1px;
  background: none;
  font: 12px/14px ${CJK};
`;
const SelectArrow = styled.span`
  position: absolute;
  right: 0; top: 0; bottom: 0;
  width: 17px;
  display: flex;
  align-items: center;
  justify-content: center;
  background: linear-gradient(#e4f2fc, #58a0dc);
  pointer-events: none;
`;
const Combo = ({ w, h, label, options }) => (
  <SelectBox $w={w} $h={h}>
    <Select aria-label={label}>{options.map((o) => <option key={o}>{o}</option>)}</Select>
    <SelectArrow><Tri w={12} /></SelectArrow>
  </SelectBox>
);

const SelectBar = styled.div`
  height: 27px;
  flex: none;
  display: flex;
  align-items: center;
  padding: 0 0 1px 2px;
  background: linear-gradient(#c4c4c4, #dadada 60%);
  border-bottom: 1px solid #b0b0b0;
`;
const Push = styled.span`margin-left: auto;`;
const StatusBar = styled.div`
  height: 21px;
  flex: none;
  display: flex;
  align-items: stretch;
  background: #dadada;
  border-top: 1px solid #f4f4f4;
`;
const StatusPad = styled.div`flex: 0 0 48%;`;
const StatusText = styled.output`
  flex: 1;
  border-left: 1px solid #f4f4f4;
  padding-left: 2px;
  font: 700 13px/20px ${CJK};
  white-space: pre;
`;
const StatusMono = styled.span`font: 700 11px/20px ${MONO};`;
const StatusCell = styled.div`
  width: ${(p) => p.$w}px;
  border-left: 1px solid #f8f8f8;
  box-shadow: -1px 0 #bbb;
  display: flex; align-items: center; justify-content: center;
`;

/* ---------- middle ---------- */
const Middle = styled.main`flex: 1; min-height: 0; display: flex; background: #d2d2d2;`;
const TabRail = styled.div`
  width: 33px;
  flex: none;
  padding: 18px 0 0 6px;
  display: flex;
  flex-direction: column;
  gap: 2px;
  background: linear-gradient(#a6a6a6, #b0b0b0);
  border-right: 1px solid #777;
`;
const Tab = styled.button`
  ${plain}
  height: 40px;
  flex: none;
  border: 2px solid #777;
  border-right: 0;
  border-radius: 4px 0 0 4px;
  background: linear-gradient(#e4e4e4, #cfcfcf);
  margin-top: ${(p) => (p.$gap ? 12 : 0)}px;
  ${(p) => p.$on && 'height: 44px; margin: -2px -1px -2px -2px; background: #f0f0f0;'}
`;
const Panel = styled.section`
  width: 244px;
  flex: none;
  display: flex;
  flex-direction: column;
  padding: 0 10px 5px 9px;
  background: #f0f0f0;
  border: 1px solid #888;
  border-left: 0;
`;
const PanelTitle = styled.h2`
  margin: 0;
  height: 35px;
  flex: none;
  padding: 5px 0 0 4px;
  display: flex;
  align-items: center;
  gap: 13px;
  font: 700 13px/20px ${CJK};
  white-space: pre;
`;
const TreeBox = styled.div`
  position: relative;
  flex: 1;
  min-height: 0;
  display: flex;
  flex-direction: column;
  border: 1px solid #777;
  box-shadow: inset 1px 1px #aaa;
`;
const TreeClip = styled.div`flex: 1; overflow: hidden;`;
const TreeTable = styled.table`
  width: 100%;
  table-layout: fixed;
  border-collapse: separate;
  border-spacing: 0;
`;
const Th = styled.th`
  height: 18px;
  padding: 0 0 0 6px;
  text-align: left;
  font: 400 12px/16px ${CJK};
  background: linear-gradient(#f8f8f8, #dcdcdc);
  border-bottom: 1px solid #aaa;
  border-right: 1px solid #aaa;
  width: ${(p) => (p.$w ? `${p.$w}px` : 'auto')};
  white-space: nowrap;
`;
const Tr = styled.tr`background: ${(p) => (p.$odd ? '#f6f6f6' : '#fff')};`;
const Td = styled.td`
  height: 20px;
  padding: 0;
  border-bottom: 1px solid #e4e4e4;
  ${(p) => p.$name && 'border-right: 1px solid #000;'}
  ${(p) => p.$sel && 'background: #0875dc;'}
`;
const Line = styled.div`display: flex; align-items: center; height: 19px; padding-left: ${(p) => p.$pad || 0}px;`;
const Slot = styled.span`
  width: 19px;
  height: 20px;
  flex: none;
  position: relative;
  display: flex;
  align-items: center;
  justify-content: center;
  &::before {
    content: '';
    position: absolute;
    left: 9px;
    top: 0;
    bottom: ${(p) => (p.$end ? '50%' : 0)};
    border-left: ${(p) => (p.$v ? '1px dotted #888' : 0)};
  }
  &::after {
    content: '';
    position: absolute;
    left: 9px;
    right: 0;
    top: 10px;
    border-top: ${(p) => (p.$h ? '1px dotted #888' : 0)};
  }
`;
const Expander = styled.button`
  ${plain}
  width: 9px; height: 9px;
  border: 1px solid #888;
  border-radius: 2px;
  background: #fff;
  position: relative;
  z-index: 1;
`;
const Status = styled.span`width: 17px; flex: none; display: flex; justify-content: center;`;
const Kind = styled.span`width: 16px; flex: none; display: flex; justify-content: center;`;
const Label = styled.span`
  flex: 1;
  padding-left: 3px;
  font: ${(p) => (p.$cjk ? `12px/19px ${CJK}` : `10px/19px ${MONO}`)};
  color: ${(p) => (p.$sel ? '#fff' : p.$link ? '#2a6cb4' : '#222')};
  background: ${(p) => (p.$sel ? '#0875dc' : 'none')};
  white-space: nowrap;
`;
const VScroll = styled.div`
  position: absolute;
  right: 0; top: 19px; bottom: 17px;
  width: 18px;
  padding: 0 2px 0 1px;
  background: #f0f0f0;
  display: flex;
  flex-direction: column;
`;
const ScrollButton = styled.button`${plain} height: 17px; width: 16px; flex: none;`;
const VThumb = styled.i`flex: 0 1 94%; max-height: 600px; background: #cdcdcd; margin-bottom: auto;`;
const HScroll = styled.div`height: 17px; flex: none; display: flex; background: #f0f0f0; padding: 0 18px 0 1px; position: relative; z-index: 1;`;
const HThumb = styled.i`width: 52px; background: #cdcdcd; margin: 1px auto 1px 0;`;
const Splitter = styled.div`
  height: 12px;
  flex: none;
  display: flex;
  align-items: center;
  gap: 4px;
  &::before, &::after { content: ''; flex: 1; border-top: 1px solid #aaa; }
`;
const Handle = styled.i`width: 38px; height: 6px; background: #dcdcdc; border: 1px solid #aaa; border-top-color: #fff; border-left-color: #fff;`;
const Section = styled.button`
  ${plain}
  height: 23px;
  flex: none;
  justify-content: space-between;
  padding-left: 6px;
  font: 700 13px/20px ${CJK};
  background: linear-gradient(#fafafa, #dadce0);
  border-bottom: 1px solid #999;
  border-right: 1px solid #aaa;
`;
const Chevron = styled.span`width: 23px; height: 22px; display: flex; align-items: center; justify-content: center; border-left: 1px solid #aaa;`;

const SideBar = styled.div`width: 69px; flex: none; display: flex; gap: 1px; padding-left: 2px; background: linear-gradient(#d6d6d6, #cccccc);`;
const SideCol = styled.div`width: 33px;`;
const VGroup = styled.div`
  display: flex;
  flex-direction: column;
  align-items: center;
  padding-top: ${(p) => p.$lead || 4}px;
  background: #e4e4e4;
  border-right: 1px solid #bbb;
  border-bottom: 1px solid #aaa;
  box-shadow: inset 0 1px #f6f6f6;
`;
const VGrip = styled.i`width: 24px; height: 4px; flex: none; ${dots('4px 4px')}`;
const VMore = styled.button`${plain} width: 31px; height: 13px; justify-content: flex-start; padding-left: 3px;`;
const VRule = styled.i`width: 100%; height: 6px; border-bottom: 1px solid #fff; box-shadow: 0 -1px #bbb inset;`;

/* ---------- graphics canvas ---------- */
const Canvas = styled.section`
  position: relative;
  flex: 1;
  min-width: 0;
  overflow: hidden;
  background: #000;
  color: #fff;
  border: 1px solid #c88c5c;
  border-width: 1px 2px 2px 1px;
`;
const Placed = styled.div`
  position: absolute;
  left: ${(p) => p.$x}px;
  top: ${(p) => p.$y}px;
  white-space: nowrap;
  text-align: center;
`;
const Academy = styled.strong`display: block; font: 400 72px/70px "Noto Sans CJK SC", sans-serif;`;
const AcademySub = styled.span`display: block; font: 300 42px/44px "Noto Sans CJK SC", sans-serif;`;
const Slogan = styled.p`margin: 0; font: 300 48px/50px "Noto Sans CJK SC", sans-serif;`;
const SchoolName = styled.strong`display: block; font: 900 40px/40px "Noto Sans CJK SC", sans-serif;`;
const SchoolEn = styled.span`display: block; font: 700 17px/20px "DejaVu Sans", sans-serif;`;
const ViewLabel = styled.span`
  position: absolute;
  left: 5px;
  bottom: 0;
  font: 13px/18px "Noto Sans", sans-serif;
  color: #dca470;
`;
const ImeBar = styled.div`
  position: absolute;
  right: 0;
  bottom: 40px;
  height: 24px;
  padding-right: 1px;
  display: flex;
  align-items: center;
  gap: 4px;
  background: #fff;
`;
const ImeKey = styled.button`${plain} width: 18px; height: 24px; color: #1c68b8; font: 700 14px/24px "Noto Sans CJK SC", sans-serif;`;
const ImeLogo = styled.span`margin: -4px 0 0 -4px;`;

const BottomBar = styled.footer`
  height: 34px;
  flex: none;
  display: flex;
  padding-left: 224px;
  background: linear-gradient(#e4e4e4, #cbcbcb);
`;

/* ---------- data ---------- */
const MENUS = [['文件', 'F'], ['编辑', 'E'], ['视图', 'V'], ['插入', 'S'], ['格式', 'R'], ['工具', 'T'], ['装配', 'A'], ['产品制造信息', 'M'], ['信息', 'I'], ['分析', 'L'], ['首选项', 'P'], ['浩强工具', null, 'v2.58'], ['窗口', 'O'], ['工具箱', null, null, 'GC '], ['星空', null, ' V6.935F'], ['帮助', 'H']];
const ROW2 = 'updown calc gradblue mill mill2 milldoc millarrow hatch millwrench machine machine2 machgrid wrenchring editA eraser formdown pages teal starform printer swap drillset calcteal clock'.split(' ');
const ROW3 = 'bluedown green wirebox mirror clip section head1 head2 wheel headname headcheck headtree headdoc headgear headA headwrench headform headstar headgrid headtext headarrow icam twin name'.split(' ');
const BOTTOM1 = 'b_abs b_xdim b_layers b_left b_right b_tag b_copy b_base b_measure b_boxp b_radius b_wire b_surf b_stripe b_info b_tube redcube b_datum b_split b_split2 b_rect'.split(' ');
const BOTTOM2 = 'b_csys b_cross b_circ b_text b_dash b_lamp b_ring'.split(' ');
const TABS = 'n_asm n_cons n_part n_op n_grid n_mach n_books n_info n_web n_clock n_hist n_rain n_wiz n_users n_file n_sys'.split(' ');
const ROWS = [
  { t: 'NC_PROGRAM', root: true },
  { t: '未用项', d: 0, cjk: true, end: true },
  { t: 'PROGRAM', d: 0, open: true, s: 'bulb' },
  { t: 'TOP', d: 1, open: true, s: 'bulb' },
  { t: '2_X_T01', d: 2, open: true, s: 'bulb', sel: true, v: true },
  { t: 'PLANAR_MILL', d: 3, s: 'bulb', link: true, v: true, end: true },
  ...Array.from({ length: 28 }, (_, i) => ({ t: `2_X_T${String(i + 2).padStart(2, '0')}`, d: 2, s: 'ok', v: true })),
];

const Bulb = () => (
  <svg width="8" height="17" viewBox="0 0 8 17"><path d="M1 1.5C2 0 6 0 7 1.5 8 5 5.5 8 4 11.5 2.5 8 0 5 1 1.5z" fill="#fcd820" stroke="#b89410" strokeWidth="0.8" /><circle cx="4" cy="14.5" r="1.7" fill="#fcd820" stroke="#b89410" strokeWidth="0.8" /></svg>
);
const Ok = () => (
  <svg width="13" height="13" viewBox="0 0 13 13"><path d="M0.5 6.5L3 5.5 5 8.5C7 4.5 9 2 12.5 0.5 9.5 4 7.5 8 5.5 12.5 3.5 12.5 2 9 0.5 6.5z" fill="#18b038" stroke="#0c7c24" strokeWidth="0.6" /></svg>
);
const Folder = () => (
  <svg width="15" height="14" viewBox="0 0 15 14"><path d="M0.5 13.5V1.5h5l1 1.5h8v10.5z" fill="#fbeeb4" stroke="#b09040" /><path d="M7 5.5h5v6H7M8 8.500h4M8 5v3.500" fill="none" stroke="#283480" strokeWidth="1.3" /></svg>
);
const MillOp = () => (
  <svg width="16" height="15" viewBox="0 0 16 15"><path d="M1.5 1v12.5H15M4 5v5.5h10V7" fill="none" stroke="#334" strokeWidth="1.2" /><rect x="7" y="0" width="5" height="8" fill="#4458b8" /><path d="M7 3l5-2M7 6l5-2" stroke="#b8c0f4" /></svg>
);
const Caret = ({ d, w = 9 }) => <svg width={w} height={w} viewBox="0 0 10 10"><path d={d} fill="none" stroke="#555" strokeWidth="2.2" /></svg>;

const Tools = ({ list }) => list.map((n) => <Cell key={n} aria-label={n}><Icon n={n} /></Cell>);

function TreeRow({ r, i }) {
  return (
    <Tr $odd={i % 2}>
      <Td $name>
        <Line $pad={r.root ? 1 : 0}>
          {r.root ? null : (
            <>
              {Array.from({ length: r.d }, (_, k) => <Slot key={k} $v={k === 2} />)}
              <Slot $v={r.v || r.end} $end={r.end} $h>
                {r.open && <Expander aria-label="−"><svg width="5" height="1"><rect width="5" height="1" fill="#333" /></svg></Expander>}
              </Slot>
              {r.s && <Status>{r.s === 'ok' ? <Ok /> : <Bulb />}</Status>}
              <Kind>{r.link ? <MillOp /> : <Folder />}</Kind>
            </>
          )}
          <Label $cjk={r.cjk} $sel={r.sel} $link={r.link}>{r.t}</Label>
        </Line>
      </Td>
      <Td $sel={r.sel}>
        {r.link && <Line $pad={9}><svg width="5" height="14" viewBox="0 0 5 14"><rect width="5" height="14" fill="#4458b8" /><path d="M0 3l5-2M0 7l5-2M0 11l5-2" stroke="#b8c0f4" /></svg></Line>}
      </Td>
    </Tr>
  );
}

const ns = { vectorEffect: 'non-scaling-stroke' };
const EDGE = '#34363c';
const Edge = ({ d, c = EDGE, w = 1 }) => <path d={d} fill="none" stroke={c} strokeWidth={w} {...ns} />;
const Stops = ({ v }) => v.map(([o, c]) => <stop key={o} offset={o} stopColor={c} />);

function Model() {
  const lin = (id, x1, y1, x2, y2, v) => (
    <linearGradient id={id} gradientUnits="userSpaceOnUse" x1={x1} y1={y1} x2={x2} y2={y2}><Stops v={v} /></linearGradient>
  );
  const bore = 'M228 410C228 290 470 206 700 206C880 206 1022 265 1022 345C1022 440 800 523 560 523C370 523 228 480 228 410Z';
  const hole = 'M1115 770C1115 660 1160 577 1222 577C1265 577 1290 630 1290 700C1290 810 1245 902 1187 902C1140 902 1115 850 1115 770Z';
  return (
    <svg width="680" height="370" viewBox="0 0 680 370" aria-label="ZM YM XM">
      <defs>
        {lin('fil', 650, 575, 622, 730, [[0, '#fff'], [0.5, '#fff'], [0.8, '#e0e4f0'], [1, '#b4bac8']])}
        {lin('filL', 110, 560, 290, 450, [[0, '#b4bacb'], [0.35, '#dde3f2'], [0.75, '#fff'], [1, '#fff']])}
        {lin('filD', 230, 660, 245, 560, [[0, '#b2b8c8'], [1, 'rgba(255,255,255,0)']])}
        {lin('mid', 95, 0, 400, 0, [[0, '#b2b8c6'], [0.5, '#a2a8b4'], [0.84, '#8f959f'], [1, '#8f959f']])}
        {lin('low', 650, 890, 632, 985, [[0, '#a4a9b6'], [0.5, '#8d919d'], [1, '#5d6068']])}
        {lin('lowL', 350, 0, 110, 0, [[0, '#9599a6'], [0.5, '#b6bbc8'], [1, '#d4d9e6']])}
        {lin('lowS', 230, 815, 215, 890, [[0, 'rgba(80,84,94,0)'], [1, '#7b7f89']])}
        {lin('bore', 228, 0, 1022, 0, [[0, '#b6bccb'], [0.35, '#a9aebb'], [0.55, '#9da1ab'], [0.75, '#7f8188'], [0.88, '#7a7c83'], [1, '#9a9da5']])}
        {lin('ring', 212, 0, 1037, 0, [[0, '#cfdcf2'], [0.12, '#fff'], [0.7, '#fff'], [0.85, '#d6e0f4'], [1, '#bfcade']])}
        {lin('hole', 1215, 577, 1190, 902, [[0, '#70737a'], [0.35, '#a6aab4'], [0.65, '#dfe2ea'], [0.85, '#fff']])}
        {lin('pin', 1055, 0, 1151, 0, [[0, '#b4b8c2'], [1, '#868991']])}
        {lin('corner', 950, 640, 935, 1020, [[0, '#fff'], [0.25, '#eef1f8'], [0.45, '#b6bcc9'], [0.8, '#a4a9b5'], [1, '#60636b']])}
        {lin('side', 1390, 440, 1455, 520, [[0, '#fff'], [1, '#9ba1b0']])}
      </defs>
      <g transform="scale(0.43367 0.33333)">
        <path d="M90 500C92 430 110 370 150 320C260 200 500 160 740 160C850 162 930 185 1010 222L1385 425C1430 440 1448 465 1450 510L1460 690C1462 760 1440 800 1400 820L1000 1025C985 1032 965 1030 950 1028L370 912C200 870 115 800 100 710L95 660Z" fill="#fff" />
        <path d="M90 500C92 430 110 370 150 320C200 268 260 235 340 208C230 255 180 310 180 375C180 440 250 490 388 522C350 550 343 620 343 677C200 650 120 590 90 530Z" fill="url(#filL)" />
        <path d="M90 530C120 590 200 650 343 677C343 620 350 560 388 522C280 560 160 560 90 530Z" fill="url(#filD)" opacity="0.8" />
        <path d="M388 522L973 635C940 650 918 700 918 787L343 677C343 620 350 550 388 522Z" fill="url(#fil)" />
        <path d="M90 530C120 590 200 650 343 677L918 787L925 943L349 833C220 810 130 760 100 705L95 660Z" fill="url(#mid)" />
        <path d="M100 705C130 760 220 810 349 833C350 880 360 900 370 912C200 870 115 800 100 710Z" fill="url(#lowL)" />
        <path d="M100 705C130 760 220 810 349 833C350 880 360 900 370 912C200 870 115 800 100 710Z" fill="url(#lowS)" />
        <path d="M349 833L925 943C930 990 950 1020 980 1029L950 1028L370 912C360 900 350 880 349 833Z" fill="url(#low)" />
        <path d="M973 635L995 667C955 690 943 720 945 787L950 940C952 990 970 1015 1010 1008L980 1029C950 1020 930 990 925 943L918 780C918 700 940 650 973 635Z" fill="url(#corner)" />
        <path d="M1380 438L1395 470C1430 460 1450 480 1452 520L1450 510C1448 465 1430 440 1400 432Z" fill="url(#side)" />
        <path d="M1010 1008L1400 810C1430 795 1450 775 1458 745C1455 785 1430 805 1400 820L1000 1025C985 1032 965 1030 960 1028Z" fill="#4c4e54" />
        <path d="M995 667L1395 470C1430 460 1450 480 1452 520L1460 690C1462 750 1440 790 1400 810L1010 1008C970 1015 952 990 950 940L945 787C943 720 955 690 995 667Z" fill="#b3b9c8" stroke={EDGE} strokeWidth="1" {...ns} />
        <path d="M212 380C212 270 450 182 700 182C890 182 1037 250 1037 330C1037 440 790 523 560 523C360 523 212 470 212 380Z" fill="url(#ring)" stroke={EDGE} strokeWidth="1" {...ns} />
        <path d={bore} fill="url(#bore)" stroke={EDGE} strokeWidth="1" {...ns} />
        <Edge d="M388 522C250 490 180 440 180 375C180 270 430 172 700 168C830 168 930 195 997 226L1380 438L973 635L388 522" />
        <Edge d="M340 208C450 172 600 161 740 162C850 164 930 187 1010 222L1385 427" c="#888" />
        <Edge d="M90 530C120 590 200 650 343 677L918 787H945M100 705C130 760 220 810 349 833L925 943H950" />
        <Edge d="M388 522C350 550 343 620 343 677L349 833C350 880 360 900 370 912" />
        <Edge d="M973 635C940 650 918 700 918 780L925 943C930 990 950 1020 980 1028M973 635L995 667M1380 438L1395 470M1380 438L1405 434M997 226L1015 224" />
        <path d={hole} fill="url(#hole)" stroke={EDGE} strokeWidth="1" {...ns} />
        <path d="M1124 840C1145 830 1166 838 1166 857C1166 872 1155 882 1143 878C1133 868 1128 856 1124 840Z" fill="#8b8e96" stroke={EDGE} strokeWidth="1" {...ns} />
        <ellipse cx="1103" cy="513" rx="48" ry="20" fill="url(#pin)" stroke={EDGE} strokeWidth="1" {...ns} />
        <Edge d="M715 382L705 150" c="#1846d8" w={1.5} />
        <path d="M704 85L695 150H714Z" fill="#1444d8" />
        <Edge d="M715 382L850 316" c="#1f8a2c" w={2} />
        <path d="M882 302L843 308L850 327Z" fill="#1c8428" />
        <Edge d="M715 382L852 430" c="#d42a20" w={2} />
        <path d="M888 441L848 440L856 419Z" fill="#d42a20" />
        <path d="M725 777L672 794L646 818L686 807Z" fill="#9ed0a2" />
        <path d="M739 776L795 786L826 806L780 800Z" fill="#ee9898" />
        <path d="M732 790L731 905H740L734 790Z" fill="#3c64e0" />
        <Edge d="M735 900V932" c="#3c64e0" w={1} />
      </g>
      <g fontFamily='"Noto Sans", sans-serif' fontSize="12">
        <text x="308" y="27" fill="#2c56e0">ZM</text>
        <text x="366" y="96" fill="#2f9a3c">YM</text>
        <text x="367" y="159" fill="#d8382c">XM</text>
        <text x="278" y="286" fill="#4c9c58">YC</text>
        <text x="343" y="281" fill="#d85048">XC</text>
        <text x="301" y="322" fill="#3c64e0">ZC</text>
      </g>
    </svg>
  );
}

export default function App() {
  const boxStroke = { fill: 'none', stroke: '#fff', strokeWidth: 1.5 };
  const mdi = { fill: 'none', stroke: '#555', strokeWidth: 2 };
  return (
    <Shell>
      <GlobalStyle />
      <TitleBar>
        <Icon n="app" s={17} />
        <TitleText>勤奋，是取得成功的关键。 - 加工 - [2_x_t.prt （修改的 ） ]</TitleText>
        <Brand>SIEMENS</Brand>
        <WinButton aria-label="最小化"><svg width="12" height="12"><rect x="2" y="8" width="7" height="3" fill="#fff" /></svg></WinButton>
        <WinButton aria-label="还原"><svg width="12" height="12"><path d="M4 4V1.5h7V8H9M1.5 4.5h7v6h-7z" {...boxStroke} /></svg></WinButton>
        <WinButton $close aria-label="关闭"><svg width="12" height="12"><path d="M1 1l10 10M11 1L1 11" {...boxStroke} strokeWidth="2" /></svg></WinButton>
      </TitleBar>
      <MenuBar>
        <MenuLead><Grip /><Icon n="cam" s={18} /></MenuLead>
        {MENUS.map(([t, k, tail, pre]) => (
          <MenuItem key={t}>
            {pre && <Key>{pre}</Key>}{t}{k && <Key>(<u>{k}</u>)</Key>}{tail && <Key>{tail}</Key>}
          </MenuItem>
        ))}
        <MdiBox>
          <MdiButton aria-label="最小化"><svg width="11" height="11"><path d="M2 8.5h7" {...mdi} /></svg></MdiButton>
          <MdiButton aria-label="还原"><svg width="11" height="11"><path d="M3 2h7v5M1 5h6v5H1zM1 6h6" {...mdi} strokeWidth="1.5" /></svg></MdiButton>
          <MdiButton aria-label="关闭"><svg width="11" height="11"><path d="M1.5 1.5l8 8M9.5 1.5l-8 8" {...mdi} strokeWidth="2.5" /></svg></MdiButton>
        </MdiBox>
      </MenuBar>

      <ToolDeck>
        <ToolRow $lead={38}>
          <Group $lead={3}>
            <Grip />
            <TextTool $w={67}><Icon n="start" />开始<Tri w={6} /></TextTool>
            <Tools list={['fresh', 'open', 'save']} /><Sep />
            <Tools list={['undo']} /><Sep />
            <TextTool $w={95}><Icon n="binoc" />命令查找器</TextTool><More aria-label="更多"><Tri /></More>
          </Group>
          <Group $lead={6}>
            <Grip />
            <Tools list={['fit']} /><Drop aria-label="更多"><Tri /></Drop>
            <Tools list={['fit', 'zoomwin', 'zoom', 'pan', 'rotate', 'orient']} /><Sep />
            <Tools list={['viewin', 'viewpage']} /><More aria-label="更多"><Tri /></More>
          </Group>
          <Group>
            <Grip />
            <Tools list={['extract', 'redcube', 'pocket', 'xdim', 'ywin', 'gslim', 'grect']} /><More aria-label="更多"><Tri /></More>
          </Group>
          <Group>
            <Grip />
            <Combo w={39} h={20} label="工作图层" options={['1']} />
            <Tools list={['layers', 'dots']} /><Drop aria-label="更多"><Tri /></Drop><Sep />
            <Tools list={['handtag', 'palette']} /><Sep />
            <Tools list={['grid', 'gridred']} /><Sep />
            <Tools list={['ruler', 'protract']} /><More aria-label="更多"><Tri /></More>
          </Group>
        </ToolRow>
        <ToolRow>
          <Group><Grip /><Tools list={ROW2} /><More aria-label="更多"><Tri /></More></Group>
        </ToolRow>
        <ToolRow>
          <Group><Grip /><Tools list={ROW3} /><More aria-label="更多"><Tri /></More></Group>
          <Group $gap={6}><Grip /><Tools list={['dxf', 'open']} /><More aria-label="更多"><Tri /></More></Group>
        </ToolRow>
      </ToolDeck>

      <SelectBar>
        <Combo w={110} label="选择过滤器" options={['没有选择过滤器']} />
        <Combo w={117} label="选择范围" options={['整个装配']} />
        <Cell $w={25}><Icon n="s_parts" s={17} /></Cell><Sep />
        <Cell $w={21}><Icon n="s_snap" s={17} /></Cell><Drop $w={8} aria-label="更多"><Tri w={6} /></Drop>
        {['s_back', 's_cube', 's_tgt', 's_bino'].map((n) => <Cell key={n} $w={24} aria-label={n}><Icon n={n} s={17} /></Cell>)}<Sep />
        <Cell $w={22}><Icon n="s_rect" s={17} /></Cell><Drop aria-label="更多"><Tri w={6} /></Drop><Sep />
        <Cell $w={22}><Icon n="s_cube2" s={18} /></Cell>
        <Push><Drop aria-label="更多"><Tri w={6} /></Drop></Push>
      </SelectBar>
      <StatusBar>
        <StatusPad />
        <StatusText><StatusMono>CAM </StatusMono>任务<StatusMono> '2_X_T01' </StatusMono>已选定</StatusText>
        <StatusCell $w={20} /><StatusCell $w={36} />
        <StatusCell $w={22}><Icon n="full" s={14} /></StatusCell>
      </StatusBar>

      <Middle>
        <TabRail>
          {TABS.map((n, i) => <Tab key={n} aria-label={n} $on={i === 3} $gap={i >= 7 && i <= 9}><Icon n={n} s={23} /></Tab>)}
        </TabRail>
        <Panel>
          <PanelTitle>
            <svg width="12" height="12" viewBox="0 0 12 12"><ellipse cx="7" cy="5" rx="4" ry="4.5" fill="#c8c060" stroke="#111" strokeWidth="1.6" /><path d="M4 8l-3 3" stroke="#111" strokeWidth="2" /></svg>
            工序导航器 － 程序顺序
          </PanelTitle>
          <TreeBox>
            <TreeClip>
              <TreeTable>
                <thead><tr><Th $w={191}>名称</Th><Th>换刀</Th></tr></thead>
                <tbody>{ROWS.map((r, i) => <TreeRow key={r.t} r={r} i={i} />)}</tbody>
              </TreeTable>
            </TreeClip>
            <VScroll>
              <ScrollButton aria-label="上"><Caret d="M1 7l4-4 4 4" /></ScrollButton>
              <VThumb />
              <ScrollButton aria-label="下"><Caret d="M1 3l4 4 4-4" /></ScrollButton>
            </VScroll>
            <HScroll>
              <ScrollButton aria-label="左"><Caret d="M7 1L3 5l4 4" /></ScrollButton>
              <HThumb />
              <ScrollButton aria-label="右"><Caret d="M3 1l4 4-4 4" /></ScrollButton>
            </HScroll>
          </TreeBox>
          <Splitter><Handle /></Splitter>
          <Section>相依性<Chevron><Caret d="M1 1l4 7 4-7" w={12} /></Chevron></Section>
          <Section>细节<Chevron><Caret d="M1 1l4 7 4-7" w={12} /></Chevron></Section>
        </Panel>
        <SideBar>
          <SideCol>
            <VGroup $lead={7}><VGrip /><Tools list={['v_trim', 'v_trim2', 'v_trim3', 'v_ext']} /><VMore aria-label="更多"><Tri dir="left" /></VMore></VGroup>
            <VGroup><VGrip /><Tools list={['v_line', 'v_arc', 'v_rect', 'v_spline', 'v_A', 'v_offset', 'v_bridge', 'v_proj', 'v_proj2', 'v_plane', 'v_planes', 'v_cyl']} /><VMore aria-label="更多"><Tri dir="left" /></VMore></VGroup>
          </SideCol>
          <SideCol>
            <VGroup><VGrip /><Tools list={['w_snakegrey', 'w_snake', 'w_verify', 'w_verify2']} /><VRule /><Tools list={['w_post']} /><VMore aria-label="更多"><Tri dir="left" /></VMore></VGroup>
            <VGroup $lead={8}><VGrip /><Tools list={['w_copy', 'w_paste']} /><VMore aria-label="更多"><Tri dir="left" /></VMore></VGroup>
            <VGroup><VGrip /><Tools list={['w_tree', 'w_tree2']} /><VMore aria-label="更多"><Tri dir="left" /></VMore></VGroup>
          </SideCol>
        </SideBar>
        <Canvas>
          <Placed $x={73} $y={31}>
            <Academy>点冠学院</Academy>
            <AcademySub>UG绘图 造型 编程</AcademySub>
          </Placed>
          <Placed $x={253} $y={201}><Model /></Placed>
          <Placed $x={258} $y={468}>
            <svg width="60" height="60" viewBox="0 0 60 60">
              <circle cx="30" cy="30" r="29" fill="#0008ff" />
              <circle cx="30" cy="30" r="14" fill="none" stroke="#fff" strokeWidth="1.3" strokeDasharray="18 4" strokeDashoffset="9" />
              <path d="M30 15v30M15 30h30" stroke="#f4f4c0" strokeWidth="1.3" />
            </svg>
          </Placed>
          <Placed $x={200} $y={594}>
            <svg width="170" height="108" viewBox="150 70 380 325" preserveAspectRatio="none">
              <g fill="#fff" fillRule="evenodd">
                <path d="M338 77L374 115L338 153L302 115ZM338 84Q342 110 366 115Q342 119 338 146Q334 119 310 115Q334 110 338 84Z" />
                <path d="M152 278L255 165L295 208L274 232L255 208L193 278L262 353H298L330 386H248Z" />
                <path d="M242 278L338 167L380 210L423 167L526 278L432 386H340ZM338 212L318 235L338 258L360 235ZM297 257L282 278L338 340L400 278L380 257L338 300ZM423 212L398 237L440 278L370 353H420L487 278Z" />
              </g>
            </svg>
          </Placed>
          <Placed $x={175} $y={703}>
            <SchoolName>点冠教育</SchoolName>
            <SchoolEn>DIANGUAN EDUCATION</SchoolEn>
          </Placed>
          <Placed $x={461} $y={698}><Slogan>没有攀登不上的高峰，只有不努力的人！</Slogan></Placed>
          <Placed $x={23} $y={731}>
            <svg width="80" height="66" viewBox="450 60 240 198">
              <path d="M515 115L572 90L632 108V178L578 198L518 182Z" fill="#a8a8aa" stroke="#d8d8d8" strokeWidth="2" />
              <path d="M515 115L575 128L632 108M575 90V198M518 182L575 168L632 178" fill="none" stroke="#c8ccd8" strokeWidth="2" />
              <path d="M573 95V205" stroke="#8494cc" strokeWidth="5" />
              <path d="M566 198h20l-9 24z" fill="#1840a8" />
              <path d="M570 88L515 108" stroke="#1c8428" strokeWidth="6" /><path d="M478 124L508 100L516 116Z" fill="#1c8428" />
              <path d="M570 88L640 104" stroke="#d42a20" strokeWidth="6" /><path d="M665 112L634 112L640 96Z" fill="#d42a20" />
              <circle cx="570" cy="86" r="10" fill="#fff" />
              <g fontFamily='"Noto Sans", sans-serif' fontSize="30"><text x="456" y="136" fill="#2f8a3c">Y</text><text x="666" y="130" fill="#c8382c">X</text><text x="567" y="240" fill="#1c3cb0">Z</text></g>
            </svg>
          </Placed>
          <ViewLabel>TOP VIEW WORK Camera TOP VIEW</ViewLabel>
          <ImeBar>
            <ImeLogo>
              <svg width="29" height="29" viewBox="0 0 29 29"><path d="M1 5L23 1l5 21-3 4-20 2z" fill="#f0602c" stroke="#d84c18" /><path d="M22 7C12 5 6 9 10 13c4 2 12 0 11 5-2 4-9 5-15 3" fill="none" stroke="#fff" strokeWidth="4" /></svg>
            </ImeLogo>
            <ImeKey>英</ImeKey>
            <ImeKey aria-label="月"><svg width="15" height="15" viewBox="0 0 15 15"><path d="M10 1c8 8-2 17-10 10 6 1 11-4 10-10z" fill="#1c68b8" /></svg></ImeKey>
            <ImeKey aria-label="标点"><svg width="12" height="12" viewBox="0 0 12 12"><circle cx="3" cy="3" r="2" fill="#1c68b8" /><path d="M8 6c4-1 3 4 0 5 1-2 0-3 0-5z" fill="#1c68b8" /></svg></ImeKey>
            <ImeKey aria-label="键盘"><svg width="17" height="13" viewBox="0 0 17 13"><rect x="0.7" y="0.7" width="15.6" height="11.6" rx="1.5" fill="none" stroke="#1c68b8" strokeWidth="1.4" /><path d="M3 4h11M3 7h11" stroke="#1c68b8" strokeWidth="1.8" strokeDasharray="2 1" /><path d="M5 10h7" stroke="#1c68b8" strokeWidth="1.4" /></svg></ImeKey>
            <ImeKey aria-label="用户"><svg width="16" height="15" viewBox="0 0 16 15"><circle cx="7" cy="4" r="4" fill="#b4bccc" /><path d="M0 14c0-6 14-6 14 0z" fill="#b4bccc" /><rect x="9" y="8" width="6" height="6" fill="#fff" stroke="#98a2b8" /></svg></ImeKey>
            <ImeKey aria-label="皮肤"><svg width="15" height="14" viewBox="0 0 15 14"><path d="M5 0.5c1 2 4 2 5 0l5 2.5-1.5 4-2.5-1v8H4V6L1.5 7 0 3z" fill="#1c68b8" /></svg></ImeKey>
            <ImeKey aria-label="工具"><svg width="15" height="15" viewBox="0 0 15 15"><path d="M1 12l6-6c-1-4 2-6 5-5.5L9.5 3 10 5l2 .5L14.5 3c1 3-2 6-5.5 5l-6 6c-1.5 1-3-.5-2-2z" fill="#1c68b8" /></svg></ImeKey>
          </ImeBar>
        </Canvas>
      </Middle>

      <BottomBar>
        <Group>
          <Grip />
          <Tools list={BOTTOM1} /><Drop aria-label="更多"><Tri /></Drop>
          <Tools list={['b_hex']} /><Drop aria-label="更多"><Tri /></Drop>
          <Tools list={BOTTOM2} /><More aria-label="更多"><Tri /></More>
        </Group>
      </BottomBar>
    </Shell>
  );
}
